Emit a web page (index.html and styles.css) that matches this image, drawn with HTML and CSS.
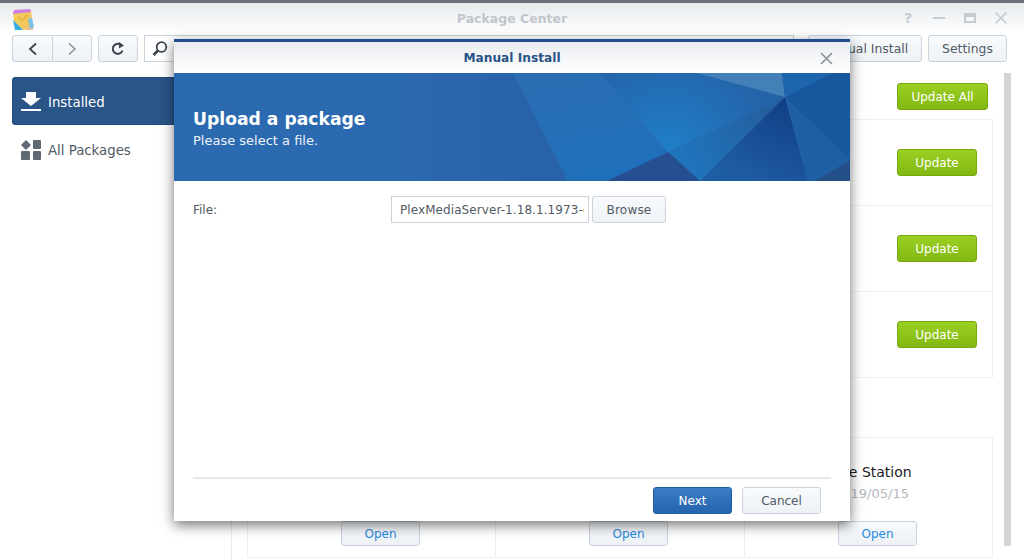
FILE: index.html
```html
<!DOCTYPE html>
<html lang="en">
<head>
<meta charset="utf-8">
<title>Package Center</title>
<link rel="stylesheet" href="styles.css">
</head>
<body>
<div class="app">
  <header class="titlebar">
    <svg class="logo" width="22" height="22" viewBox="0 0 22 22">
      <defs>
        <linearGradient id="bag" x1="0" y1="0" x2="1" y2="1"><stop offset="0" stop-color="#f5d35a"/><stop offset="1" stop-color="#f0c060"/></linearGradient>
      </defs>
      <path d="M1 4 L19 1 L21 20 L3 21 Z" fill="url(#bag)"/>
      <path d="M2 1 L18 0 L19 3 L1 5 Z" fill="#cf7fe0"/>
      <path d="M1 11 L11 21 L3 21 Z" fill="#38aee6"/>
      <path d="M13 21 L21 21 L20 13 Z" fill="#eebd8c"/>
      <path d="M6 7 Q10 15 15 6" fill="none" stroke="#e2b038" stroke-width="1.4"/>
      <path d="M16 10 L20 9 L22 18 L18 20 Z" fill="#78c3e6"/>
    </svg>
    <div class="title">Package Center</div>
    <div class="winctl">
      <span class="q">?</span>
      <svg width="14" height="14" viewBox="0 0 14 14"><path d="M1 7H13" stroke="#c6cbd1" stroke-width="2"/></svg>
      <svg width="14" height="14" viewBox="0 0 14 14"><path d="M2 3H12V11H2Z M2 5H12" fill="none" stroke="#c6cbd1" stroke-width="2"/></svg>
      <svg width="14" height="14" viewBox="0 0 14 14"><path d="M1.500 1.500L12.500 12.500M12.500 1.500L1.500 12.500" stroke="#c6cbd1" stroke-width="1.600"/></svg>
    </div>
  </header>
  <nav class="toolbar">
    <div class="btn-group">
      <button class="btn nav-btn"><svg width="12" height="14" viewBox="0 0 12 14"><path d="M9 1.500L3 7L9 12.500" fill="none" stroke="#3a4450" stroke-width="1.800"/></svg></button>
      <button class="btn nav-btn"><svg width="12" height="14" viewBox="0 0 12 14"><path d="M3 1.500L9 7L3 12.500" fill="none" stroke="#8a929b" stroke-width="1.500"/></svg></button>
    </div>
    <button class="btn nav-btn refresh"><svg width="14" height="14" viewBox="0 0 14 14"><path d="M11.500 8.500A5 5 0 1 1 9.500 2.600" fill="none" stroke="#3a4450" stroke-width="2"/><path d="M8 0L13 3.500L8 6.500Z" fill="#3a4450"/></svg></button>
    <div class="search"><svg width="18" height="18" viewBox="0 0 18 18"><circle cx="10.500" cy="7" r="4.800" fill="none" stroke="#3a4450" stroke-width="1.800"/><path d="M7 10.500L2.500 15" stroke="#3a4450" stroke-width="2.600"/></svg></div>
    <button class="btn text-btn install">Manual Install</button>
    <button class="btn text-btn settings">Settings</button>
  </nav>
  <div class="content">
    <aside class="sidebar">
      <div class="side-item active">
        <svg width="20" height="20" viewBox="0 0 20 20"><path d="M5 0H15V6H20L10 14L0 6H5Z" fill="#fff"/><rect y="17" width="20" height="2" fill="#fff"/></svg>
        <span>Installed</span>
      </div>
      <div class="side-item">
        <svg width="20" height="20" viewBox="0 0 20 20" fill="#5f6974"><path d="M5 0L10 5L5 10L0 5Z"/><rect x="12" y="0" width="8" height="9" rx="1"/><rect x="0" y="11" width="9" height="9" rx="1"/><rect x="12" y="11" width="8" height="9" rx="1"/></svg>
        <span>All Packages</span>
      </div>
    </aside>
    <main class="main">
      <div class="main-inner">
        <div class="update-all-row"><button class="btn green all">Update All</button></div>
        <section class="card">
          <div class="row"><button class="btn green">Update</button></div>
          <div class="row"><button class="btn green">Update</button></div>
          <div class="row"><button class="btn green">Update</button></div>
        </section>
        <section class="card grid">
          <div class="cell"><button class="btn open">Open</button></div>
          <div class="cell"><button class="btn open">Open</button></div>
          <div class="cell">
            <div class="pkg-name">File Station</div>
            <div class="pkg-date">2019/05/15</div>
            <button class="btn open">Open</button>
          </div>
        </section>
      </div>
      <div class="scrollbar"></div>
    </main>
  </div>
</div>

<div class="modal">
  <div class="modal-head">
    <span class="modal-title">Manual Install</span>
    <svg class="modal-close" width="13" height="13" viewBox="0 0 13 13"><path d="M1 1L12 12M12 1L1 12" stroke="#8b9096" stroke-width="1.600"/></svg>
  </div>
  <div class="banner">
    <svg class="banner-art" width="676" height="108" viewBox="0 0 676 108">
      <defs>
        <linearGradient id="g0" gradientUnits="userSpaceOnUse" x1="220" y1="0" x2="370" y2="0"><stop offset="0" stop-color="#2b69b0"/><stop offset="1" stop-color="#2862a9"/></linearGradient>
        <linearGradient id="g1" gradientUnits="userSpaceOnUse" x1="400" y1="0" x2="420" y2="108"><stop offset="0" stop-color="#2a6db2"/><stop offset="1" stop-color="#1e70ba"/></linearGradient>
        <radialGradient id="g2" gradientUnits="userSpaceOnUse" cx="494" cy="79" r="105"><stop offset="0" stop-color="#1f80c8"/><stop offset="1" stop-color="#2463a9"/></radialGradient>
        <linearGradient id="g4" gradientUnits="userSpaceOnUse" x1="590" y1="40" x2="510" y2="85"><stop offset="0" stop-color="#24609f"/><stop offset="1" stop-color="#1f74bc"/></linearGradient>
        <linearGradient id="g5" gradientUnits="userSpaceOnUse" x1="611" y1="24" x2="570" y2="108"><stop offset="0" stop-color="#113f85"/><stop offset="1" stop-color="#1f5da3"/></linearGradient>
      </defs>
      <polygon points="220,0 339,0 394,108 220,108" fill="url(#g0)"/>
      <polygon points="339,0 426,0 494,79 433,108 394,108" fill="url(#g1)"/>
      <polygon points="426,0 523,0 611,24 494,79" fill="url(#g2)"/>
      <polygon points="523,0 608,0 611,24" fill="#4380b8"/>
      <polygon points="608,0 659,0 611,24" fill="#1d65ad"/>
      <polygon points="659,0 676,0 676,87 611,24" fill="#18579e"/>
      <polygon points="611,24 494,79 526,108" fill="url(#g4)"/>
      <polygon points="611,24 526,108 634,108" fill="url(#g5)"/>
      <polygon points="611,24 676,87 641,108 634,108" fill="#1f5fa4"/>
      <polygon points="494,79 433,108 526,108" fill="#254f90"/>
      <polygon points="676,87 641,108 676,108" fill="#234f89"/>
    </svg>
    <h1 class="banner-title">Upload a package</h1>
    <p class="banner-sub">Please select a file.</p>
  </div>
  <div class="modal-body">
    <div class="field">
      <label class="field-label" for="pkg-file">File:</label>
      <input class="file-input" id="pkg-file" type="text" readonly value="PlexMediaServer-1.18.1.1973-ca1ae27d3.x86_64.spk">
      <button class="btn browse">Browse</button>
    </div>
  </div>
  <div class="modal-foot">
    <button class="btn primary">Next</button>
    <button class="btn cancel">Cancel</button>
  </div>
</div>
</body>
</html>
```
FILE: styles.css
```css
* { box-sizing: border-box; }
html, body { margin: 0; height: 100%; overflow: hidden; background: #fff; }
body { font-family: "DejaVu Sans", Verdana, sans-serif; font-size: 12px; color: #505a64; }
button { font-family: inherit; font-size: 12px; padding: 0; cursor: default; }

.app { width: 1024px; height: 560px; display: flex; flex-direction: column; border-top: 3px solid #6b7179; }
.titlebar { height: 30px; flex: none; display: grid; grid-template-columns: 1fr auto 1fr; align-items: center; padding: 0 16px; background: linear-gradient(#e6e9ec, #fbfcfc 85%, #fff); }
.logo { display: block; margin: 4px 0 0 -4px; }
.title { font-size: 12.500px; font-weight: bold; color: #c2c6cb; }
.winctl { display: flex; align-items: center; justify-content: flex-end; gap: 17px; }
.q { width: 14px; text-align: center; font-size: 14px; font-weight: bold; color: #c6cbd1; }

.toolbar { height: 27px; margin-top: 2px; flex: none; display: flex; align-items: stretch; padding: 0 17px 0 12px; }
.btn { border: 1px solid #c8d3de; border-radius: 3px; background: linear-gradient(#f8fafc, #eef2f6); color: #505a64; }
.btn-group { display: flex; flex: none; }
.nav-btn { width: 40px; flex: none; display: flex; align-items: center; justify-content: center; }
.btn-group .nav-btn:first-child { border-radius: 3px 0 0 3px; border-right: 0; }
.btn-group .nav-btn:last-child { border-radius: 0 3px 3px 0; }
.refresh { margin-left: 6px; }
.search { width: 650px; flex: none; margin-left: 6px; border: 1px solid #c8d3de; display: flex; align-items: center; padding-left: 6px; background: #fff; }
.text-btn { font-size: 12.400px; flex: none; }
.install { margin-left: 14px; width: 114px; }
.settings { margin-left: 6px; width: 79px; }

.content { flex: 1; display: flex; min-height: 0; }
.sidebar { width: 232px; flex: none; padding: 15px 0 0 12px; border-right: 1px solid #e8eaec; }
.side-item { height: 48px; display: flex; align-items: center; gap: 7px; padding: 2px 0 0 9px; font-size: 13.300px; color: #505a64; border-radius: 3px; }
.side-item.active { background: #2a5589; color: #fff; border: 1px solid #1f4a80; padding-left: 8px; }
.main { flex: 1; display: flex; min-width: 0; padding: 11px 13px 0 15px; }
.main-inner { width: 746px; flex: none; display: flex; flex-direction: column; }
.update-all-row { height: 46px; display: flex; justify-content: flex-end; padding-right: 5px; padding-top: 10px; }
.scrollbar { width: 7px; height: 473px; flex: none; margin-left: 11px; background: #d3d5d9; }
.green { width: 80px; height: 27px; border: 1px solid #77a80e; background: linear-gradient(#9bcf23, #82b812); color: #fff; font-size: 12px; }
.all { width: 91px; }
.card { border: 1px solid #eef0f3; background: #fff; flex: none; }
.row { height: 86px; padding: 29px 0 0 649px; border-bottom: 1px solid #eef0f3; }
.row:last-child { border-bottom: 0; height: 85px; }
.grid { margin-top: 59px; height: 121px; display: grid; grid-template-columns: 248px 249px 1fr; }
.cell { position: relative; border-right: 1px solid #eef0f3; padding: 26px 0 0 89px; }
.cell:last-child { border-right: 0; }
.pkg-name { font-size: 14px; color: #1a1a1a; height: 22px; }
.pkg-date { font-size: 13px; color: #b4b8bd; height: 27px; }
.open { position: absolute; top: 83px; left: 93px; width: 79px; height: 25px; color: #1f8ae0; font-size: 12px; border-color: #c8d3de; }

.modal { position: absolute; left: 174px; top: 39px; width: 676px; height: 482px; background: #fff; border-top: 3px solid #204e8a; box-shadow: 0 4px 12px rgba(0, 0, 0, .55); display: flex; flex-direction: column; }
.modal-head { height: 31px; flex: none; position: relative; display: flex; align-items: center; justify-content: center; background: linear-gradient(#e9ecf0, #fff); }
.modal-title { font-size: 12.200px; font-weight: bold; color: #2a5386; }
.modal-close { position: absolute; right: 17px; top: 10px; }
.banner { height: 108px; flex: none; position: relative; padding: 34px 19px 0; background: #2b69b0; color: #fff; border-top: 1px solid #2566ac; border-bottom: 1px solid #2566ac; }
.banner-art { position: absolute; left: 0; top: -1px; }
.banner-title { position: relative; margin: 0; font-size: 17.200px; line-height: 22px; font-weight: bold; }
.banner-sub { position: relative; margin: 2px 0 0; font-size: 13px; line-height: 18px; color: #eef3f9; }
.modal-body { flex: 1; padding: 15px 19px 0; }
.field { display: flex; align-items: center; height: 27px; }
.field-label { width: 198px; flex: none; padding-top: 1px; }
.file-input { width: 198px; height: 27px; flex: none; border: 1px solid #c8d3de; border-radius: 0; padding: 0 4px 0 8px; outline: 0; background: #fff; font: 12px "DejaVu Sans", Verdana, sans-serif; letter-spacing: .08px; color: #505a64; }
.browse { width: 74px; height: 27px; margin-left: 3px; letter-spacing: .2px; }
.modal-foot { height: 44px; flex: none; margin: 0 19px; border-top: 2px solid #e6e7e9; display: flex; gap: 10px; justify-content: flex-end; padding: 8px 10px 0 0; }
.primary { width: 79px; height: 27px; border: 1px solid #1f5ca6; background: linear-gradient(#3c7cc4, #2565b0); color: #fff; }
.cancel { width: 79px; height: 27px; }
```
